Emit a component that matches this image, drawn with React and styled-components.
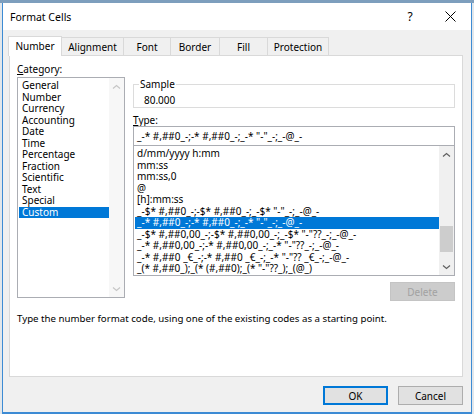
import styled, { createGlobalStyle } from 'styled-components';

const GlobalStyle = createGlobalStyle`
  html, body {
    margin: 0;
    padding: 0;
  }
  body {
    width: 474px;
    height: 414px;
    overflow: hidden;
    background: #e2e7eb;
    font-family: 'Noto Sans', 'DejaVu Sans', sans-serif;
    font-size: 10px;
    color: #000;
  }
`;

const Backdrop = styled.div`
  box-sizing: border-box;
  height: 414px;
  border-top: 3px solid #7d9ebd;
  padding: 0 2px;
`;

const Dialog = styled.div`
  box-sizing: border-box;
  width: 470px;
  height: 411px;
  display: flex;
  flex-direction: column;
  background: #f0f0f0;
  border: 1px solid #3d8bd4;
  border-top: none;
  border-bottom-width: 2px;
`;

const TitleBar = styled.div`
  display: flex;
  align-items: center;
  height: 27px;
  background: #fff;
  padding-left: 7px;
`;

const Title = styled.div`
  flex: 1;
  font-size: 10.5px;
`;

const CaptionButton = styled.div`
  width: ${(p) => p.$w}px;
  height: 27px;
  margin-right: ${(p) => p.$mr || 0}px;
  display: flex;
  align-items: center;
  justify-content: center;
  font-size: 12px;
`;

const Body = styled.div`
  flex: 1;
  display: flex;
  flex-direction: column;
  padding: 6px 8px 0 5px;
`;

const TabRow = styled.div`
  display: flex;
  align-items: flex-end;
  height: 19px;
  position: relative;
  z-index: 1;
`;

const Tab = styled.div`
  box-sizing: border-box;
  width: ${(p) => p.$w}px;
  height: ${(p) => (p.$active ? 20 : 18)}px;
  margin-bottom: ${(p) => (p.$active ? -1 : 0)}px;
  display: flex;
  align-items: center;
  justify-content: center;
  padding-bottom: ${(p) => (p.$active ? 1 : 0)}px;
  background: ${(p) => (p.$active ? '#fff' : '#f0f0f0')};
  border: 1px solid #d9d9d9;
  border-bottom: none;
  border-left: ${(p) => (p.$first ? '1px solid #d9d9d9' : 'none')};
  font-size: 10px;
`;

const Panel = styled.div`
  box-sizing: border-box;
  height: 322px;
  margin-left: 1px;
  background: #fff;
  border: 1px solid #d9d9d9;
  padding: 6px 7px 0 7px;
  display: flex;
  flex-direction: column;
`;

const Columns = styled.div`
  display: flex;
  gap: 8px;
`;

const LeftCol = styled.div`
  width: 108px;
  display: flex;
  flex-direction: column;
`;

const RightCol = styled.div`
  width: 322px;
  display: flex;
  flex-direction: column;
  padding-top: ${(p) => p.$top}px;
`;

const Label = styled.div`
  line-height: ${(p) => p.$lh || 14}px;
  margin-top: ${(p) => p.$mt || 0}px;
  margin-bottom: ${(p) => (p.$mt ? 0 : 1)}px;
`;

const ListBox = styled.div`
  box-sizing: border-box;
  height: ${(p) => p.$h}px;
  display: flex;
  border: 1px solid #abadb3;
  border-top: ${(p) => (p.$joined ? 'none' : '1px solid #abadb3')};
  background: #fff;
`;

const Rows = styled.div`
  flex: 1;
  min-width: 0;
  padding: 2px 0 0 1px;
  overflow: hidden;
`;

const Row = styled.div`
  height: 11.5px;
  line-height: 11.5px;
  padding-left: ${(p) => p.$pl}px;
  white-space: nowrap;
  background: ${(p) => (p.$selected ? '#0078d7' : 'transparent')};
  color: ${(p) => (p.$selected ? '#fff' : '#000')};
`;

const ScrollBar = styled.div`
  width: 15px;
  display: flex;
  flex-direction: column;
  background: ${(p) => (p.$disabled ? '#f7f7f7' : '#f0f0f0')};
`;

const ArrowBox = styled.div`
  height: 17px;
  display: flex;
  align-items: center;
  justify-content: center;
  color: ${(p) => (p.$disabled ? '#c6c6c6' : '#606060')};
`;

const Track = styled.div`
  flex: 1;
  display: flex;
  flex-direction: column;
  padding: 0 1px;
`;

const Thumb = styled.div`
  height: 26px;
  margin-top: 63px;
  background: #cdcdcd;
`;

const Group = styled.fieldset`
  margin: 0;
  padding: 0 0 0 5px;
  min-inline-size: 0;
  border: 1px solid #dcdcdc;
`;

const Legend = styled.legend`
  padding: 0 1px;
  line-height: 14px;
`;

const SampleValue = styled.div`
  line-height: 14px;
  padding: 2px 0 0 5px;
  height: 14px;
`;

const TypeInput = styled.div`
  box-sizing: border-box;
  height: 20px;
  border: 1px solid #abadb3;
  padding-left: 3px;
  line-height: 18px;
  white-space: nowrap;
  overflow: hidden;
`;

const Button = styled.div`
  box-sizing: border-box;
  width: 65px;
  height: 19px;
  display: flex;
  align-items: center;
  justify-content: center;
  font-size: 10px;
  background: ${(p) => (p.$disabled ? '#cccccc' : '#e1e1e1')};
  color: ${(p) => (p.$disabled ? '#a2a2a2' : '#000')};
  border: 1px solid ${(p) => (p.$default ? '#0078d7' : p.$disabled ? '#c4c4c4' : '#adadad')};
  box-shadow: ${(p) => (p.$default ? 'inset 0 0 0 1px #0078d7' : 'none')};
`;

const DeleteWrap = styled.div`
  display: flex;
  justify-content: flex-end;
  margin-top: 6px;
`;

const Description = styled.div`
  margin-top: 11px;
  line-height: 14px;
  font-size: 9.7px;
`;

const Footer = styled.div`
  display: flex;
  justify-content: flex-end;
  gap: 10px;
  padding-top: 9px;
`;

const Chevron = ({ down }) => (
  <svg width="9" height="6" viewBox="0 0 9 6">
    <polyline
      points={down ? '1,1.5 4.5,4.5 8,1.5' : '1,4.5 4.5,1.5 8,4.5'}
      fill="none"
      stroke="currentColor"
      strokeWidth="1.2"
    />
  </svg>
);

const tabs = [
  ['Number', 54],
  ['Alignment', 62],
  ['Font', 47],
  ['Border', 49],
  ['Fill', 48],
  ['Protection', 61],
];

const categories = [
  'General', 'Number', 'Currency', 'Accounting', 'Date', 'Time',
  'Percentage', 'Fraction', 'Scientific', 'Text', 'Special', 'Custom',
];

const types = [
  'd/mm/yyyy h:mm',
  'mm:ss',
  'mm:ss,0',
  '@',
  '[h]:mm:ss',
  '_-$* #,##0_-;-$* #,##0_-;_-$* "-"_-;_-@_-',
  '_-* #,##0_-;-* #,##0_-;_-* "-"_-;_-@_-',
  '_-$* #,##0,00_-;-$* #,##0,00_-;_-$* "-"??_-;_-@_-',
  '_-* #,##0,00_-;-* #,##0,00_-;_-* "-"??_-;_-@_-',
  '_-* #,##0 _€_-;-* #,##0 _€_-;_-* "-"?? _€_-;_-@_-',
  '_(* #,##0_);_(* (#,##0);_(* "-"??_);_(@_)',
];

export default function App() {
  return (
    <>
      <GlobalStyle />
      <Backdrop>
        <Dialog>
          <TitleBar>
            <Title>Format Cells</Title>
            <CaptionButton $w={30} $mr={5}>?</CaptionButton>
            <CaptionButton $w={41}>
              <svg width="11" height="11" viewBox="0 0 11 11">
                <path d="M0.5 0.5 L10.5 10.5 M10.5 0.5 L0.5 10.5" stroke="#000" strokeWidth="1" />
              </svg>
            </CaptionButton>
          </TitleBar>
          <Body>
            <TabRow>
              {tabs.map(([name, w], idx) => (
                <Tab key={name} $w={w} $active={idx === 0} $first={idx === 0}>
                  {name}
                </Tab>
              ))}
            </TabRow>
            <Panel>
              <Columns>
                <LeftCol>
                  <Label>
                    <u>C</u>ategory:
                  </Label>
                  <ListBox $h={221}>
                    <Rows>
                      {categories.map((c) => (
                        <Row key={c} $pl={3} $selected={c === 'Custom'}>
                          {c}
                        </Row>
                      ))}
                    </Rows>
                    <ScrollBar $disabled>
                      <ArrowBox $disabled>
                        <Chevron />
                      </ArrowBox>
                      <Track />
                      <ArrowBox $disabled>
                        <Chevron down />
                      </ArrowBox>
                    </ScrollBar>
                  </ListBox>
                </LeftCol>
                <RightCol $top={15}>
                  <Group>
                    <Legend>Sample</Legend>
                    <SampleValue>80.000</SampleValue>
                  </Group>
                  <Label $lh={12} $mt={6}>
                    <u>T</u>ype:
                  </Label>
                  <TypeInput>{types[6]}</TypeInput>
                  <ListBox $h={130} $joined>
                    <Rows>
                      {types.map((t, idx) => (
                        <Row key={t} $pl={2} $selected={idx === 6}>
                          {t}
                        </Row>
                      ))}
                    </Rows>
                    <ScrollBar>
                      <ArrowBox>
                        <Chevron />
                      </ArrowBox>
                      <Track>
                        <Thumb />
                      </Track>
                      <ArrowBox>
                        <Chevron down />
                      </ArrowBox>
                    </ScrollBar>
                  </ListBox>
                  <DeleteWrap>
                    <Button $disabled>Delete</Button>
                  </DeleteWrap>
                </RightCol>
              </Columns>
              <Description>
                Type the number format code, using one of the existing codes as a starting point.
              </Description>
            </Panel>
            <Footer>
              <Button $default>OK</Button>
              <Button>Cancel</Button>
            </Footer>
          </Body>
        </Dialog>
      </Backdrop>
    </>
  );
}
